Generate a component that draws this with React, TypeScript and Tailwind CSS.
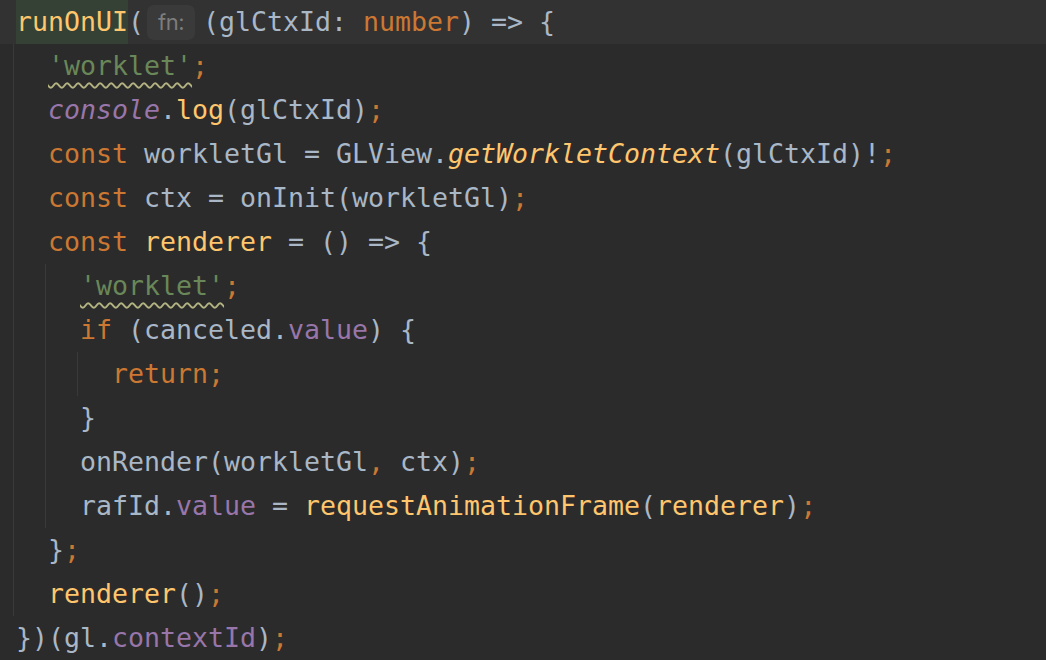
import type { ReactNode } from 'react';

type Tok = [string, string];

const C: Record<string, string> = {
  t: 'text-[#a9b7c6]',
  k: 'text-[#cc7832]',
  f: 'text-[#ffc66d]',
  fi: 'text-[#ffc66d] italic',
  s: 'text-[#6a8759] underline decoration-wavy decoration-[#b3b382] decoration-[1.5px] underline-offset-[7px]',
  p: 'text-[#9876aa]',
  pi: 'text-[#9876aa] italic',
};

const LINES: Tok[][] = [
  [],
  [['t', '  '], ['s', "'worklet'"], ['k', ';']],
  [['t', '  '], ['pi', 'console'], ['t', '.'], ['f', 'log'], ['t', '(glCtxId)'], ['k', ';']],
  [['t', '  '], ['k', 'const'], ['t', ' workletGl = GLView.'], ['fi', 'getWorkletContext'], ['t', '(glCtxId)!'], ['k', ';']],
  [['t', '  '], ['k', 'const'], ['t', ' ctx = onInit(workletGl)'], ['k', ';']],
  [['t', '  '], ['k', 'const'], ['t', ' '], ['f', 'renderer'], ['t', ' = () => {']],
  [['t', '    '], ['s', "'worklet'"], ['k', ';']],
  [['t', '    '], ['k', 'if'], ['t', ' (canceled.'], ['p', 'value'], ['t', ') {']],
  [['t', '      '], ['k', 'return;']],
  [['t', '    }']],
  [['t', '    onRender(workletGl'], ['k', ','], ['t', ' ctx)'], ['k', ';']],
  [['t', '    rafId.'], ['p', 'value'], ['t', ' = '], ['f', 'requestAnimationFrame'], ['t', '('], ['f', 'renderer'], ['t', ')'], ['k', ';']],
  [['t', '  }'], ['k', ';']],
  [['t', '  '], ['f', 'renderer'], ['t', '()'], ['k', ';']],
  [['t', '})(gl.'], ['p', 'contextId'], ['t', ')'], ['k', ';']],
];

function Line({ toks }: { toks: Tok[] }) {
  return (
    <div className="h-[44px] leading-[44px] pl-[16px] whitespace-pre">
      {toks.map(([k, v], i) => (
        <span key={i} className={C[k]}>{v}</span>
      ))}
    </div>
  );
}

function FirstLine(): ReactNode {
  return (
    <div className="h-[44px] leading-[44px] pl-[16px] whitespace-pre bg-[#323232] flex items-center">
      <span className="inline-block h-[44px] bg-[#344134] text-[#ffc66d]">runOnUI</span>
      <span className="text-[#a9b7c6]">(</span>
      <span className="ml-[3px] mr-[8px] w-[48px] h-[35px] rounded-[7px] bg-[#3a3a3a] text-[#7d7d7d] text-[22px] leading-[35px] text-center font-['Inter',sans-serif] tracking-[-0.5px]">
        fn:
      </span>
      <span className="text-[#a9b7c6]">(glCtxId: </span>
      <span className="text-[#cc7832]">number</span>
      <span className="text-[#a9b7c6]">) =&gt; {'{'}</span>
    </div>
  );
}

export default function App() {
  return (
    <div className="relative w-[1046px] h-[660px] overflow-hidden bg-[#2b2b2b] font-['DejaVu_Sans_Mono',monospace] text-[26.58px]">
      <FirstLine />
      {LINES.slice(1).map((toks, i) => (
        <Line key={i} toks={toks} />
      ))}

      {/* indent guides */}
      <div className="absolute left-[13px] top-[44px] h-[572px] w-px bg-[#393939]" />
      <div className="absolute left-[45px] top-[264px] h-[264px] w-px bg-[#393939]" />
      <div className="absolute left-[77px] top-[352px] h-[44px] w-px bg-[#393939]" />
    </div>
  );
}
